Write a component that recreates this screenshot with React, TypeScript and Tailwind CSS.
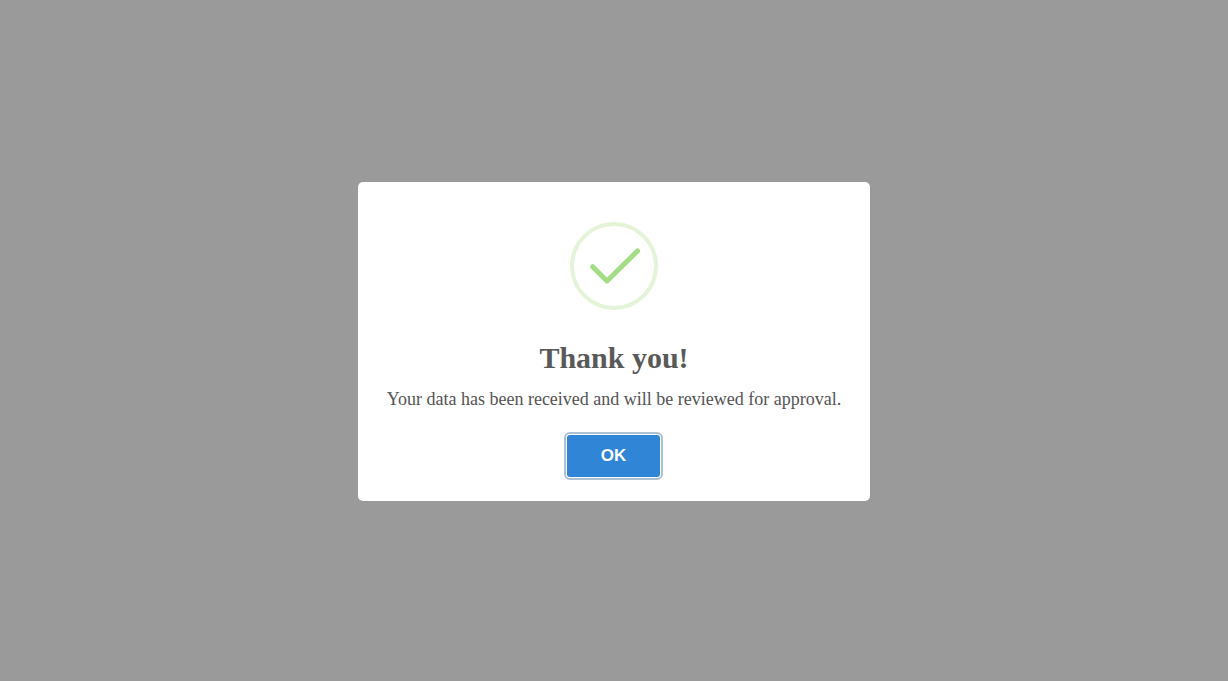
const App = () => {
  return (
    <div className="h-screen w-full box-border pt-[2px] bg-[#9a9a9a] flex items-center justify-center overflow-hidden">
      <div className="w-[512px] h-[319px] bg-white rounded-[5px] flex flex-col items-center pt-[40px]">
        {/* Success check */}
        <div className="w-[88px] h-[88px] shrink-0 rounded-full border-4 border-[#e3f4d9] flex items-center justify-center">
          <svg width="80" height="80" viewBox="0 0 80 80" fill="none" className="shrink-0">
            <path
              d="M18.7 40.7 L33 55 L63.5 25"
              stroke="#a5dc86"
              strokeWidth="5"
              strokeLinecap="round"
              strokeLinejoin="round"
            />
          </svg>
        </div>

        <h2 className="mt-[29px] h-[38px] leading-[38px] text-[30px] font-bold text-[#595959] font-['Liberation_Serif',serif]">
          Thank you!
        </h2>
        <p className="mt-[10px] h-[24px] leading-[24px] text-[18px] text-[#545454] font-['Liberation_Serif',serif]">
          Your data has been received and will be reviewed for approval.
        </p>

        <button className="mt-[21px] mr-[1px] w-[99px] h-[48px] rounded-[6px] border-[2px] border-[#adc1d5] bg-white p-[1px] cursor-pointer">
          <span className="flex h-full w-full items-center justify-center rounded-[3px] bg-[#3085d6] text-white text-[17px] font-bold font-['Liberation_Sans',sans-serif]">
            OK
          </span>
        </button>
      </div>
    </div>
  );
};

export default App;
